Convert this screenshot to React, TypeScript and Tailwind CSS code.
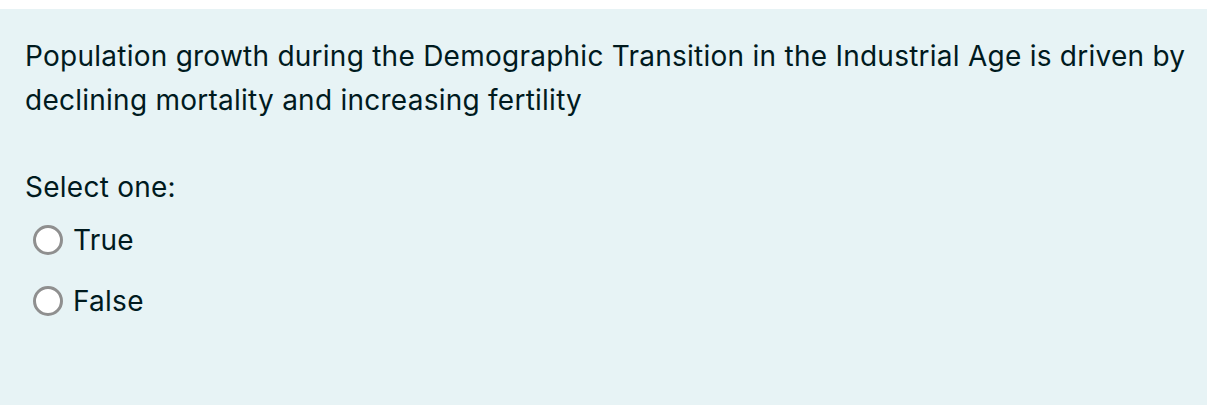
const Radio = ({ label }: { label: string }) => (
  <label className="flex items-center h-[61px] pl-[8px]">
    <span className="w-[30px] h-[30px] rounded-full border-[3px] border-[#8f8f8f] bg-white shrink-0" />
    <span className="ml-[10px]">{label}</span>
  </label>
);

export default function App() {
  return (
    <div className="bg-white pt-[9px] h-[405px]" style={{ fontFamily: "Inter, 'Noto Sans', sans-serif" }}>
      <div className="bg-[#e7f3f5] h-full pl-[25px] pr-[10px] pt-[25px] text-[#001a1e] text-[28px] tracking-[0.25px] leading-[44px]">
        <p>
          Population growth during the Demographic Transition in the Industrial Age is driven by declining mortality and
          increasing fertility
        </p>
        <div className="mt-[43px]">Select one:</div>
        <div>
          <Radio label="True" />
          <Radio label="False" />
        </div>
      </div>
    </div>
  );
}
